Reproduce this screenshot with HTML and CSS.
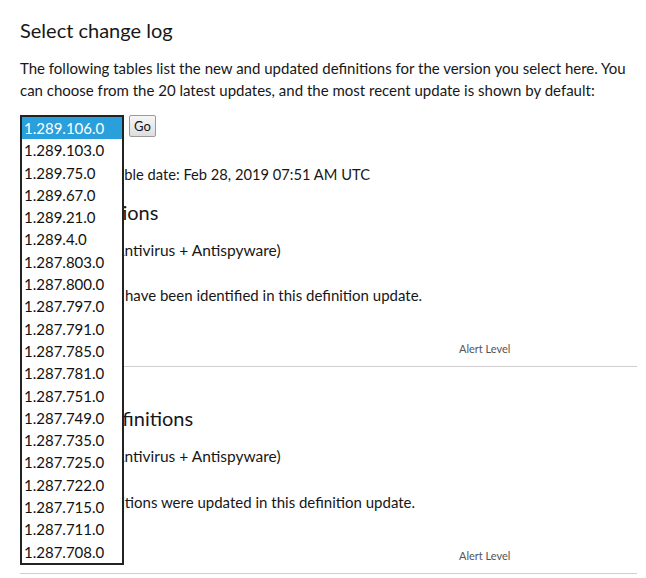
FILE: index.html
```html
<!DOCTYPE html>
<html lang="en">
<head>
<meta charset="utf-8">
<title>Select change log</title>
<link rel="stylesheet" href="styles.css">
</head>
<body>
<main class="page">
  <h2 class="title">Select change log</h2>
  <p class="intro">The following tables list the new and updated definitions for the version you select here. You can choose from the 20 latest updates, and the most recent update is shown by default:</p>

  <div class="picker">
    <div class="select">
      <span class="select-value">1.289.106.0</span>
      <ul class="options">
        <li class="option selected">1.289.106.0</li>
        <li class="option">1.289.103.0</li>
        <li class="option">1.289.75.0</li>
        <li class="option">1.289.67.0</li>
        <li class="option">1.289.21.0</li>
        <li class="option">1.289.4.0</li>
        <li class="option">1.287.803.0</li>
        <li class="option">1.287.800.0</li>
        <li class="option">1.287.797.0</li>
        <li class="option">1.287.791.0</li>
        <li class="option">1.287.785.0</li>
        <li class="option">1.287.781.0</li>
        <li class="option">1.287.751.0</li>
        <li class="option">1.287.749.0</li>
        <li class="option">1.287.735.0</li>
        <li class="option">1.287.725.0</li>
        <li class="option">1.287.722.0</li>
        <li class="option">1.287.715.0</li>
        <li class="option">1.287.711.0</li>
        <li class="option">1.287.708.0</li>
      </ul>
    </div>
    <button class="go" type="button">Go</button>
  </div>

  <p class="date">Definition available date: Feb 28, 2019 07:51 AM UTC</p>

  <section class="section">
    <h3 class="sec-title">New definitions</h3>
    <p class="engine">Antimalware (Antivirus + Antispyware)</p>
    <p class="note">No new threats have been identified in this definition update.</p>
    <div class="thead">
      <span class="th">Threat name</span>
      <span class="th">Alert Level</span>
    </div>
  </section>

  <section class="section">
    <h3 class="sec-title">Updated definitions</h3>
    <p class="engine">Antimalware (Antivirus + Antispyware)</p>
    <p class="note note-updated">The listed definitions were updated in this definition update.</p>
    <div class="thead">
      <span class="th">Threat name</span>
      <span class="th">Alert Level</span>
    </div>
  </section>
</main>
</body>
</html>
```

FILE: styles.css
```css
* { box-sizing: border-box; }
html, body { margin: 0; padding: 0; background: #fff; }
body {
  font-family: Lato, "Open Sans", "Liberation Sans", sans-serif;
  color: #171717;
}
.page {
  width: 617px;
  margin-left: 20px;
  padding-top: 16px;
}
.title {
  margin: 0;
  font-size: 20px;
  line-height: 28px;
  font-weight: 400;
}
.intro {
  margin: 13px 0 0;
  font-size: 15px;
  line-height: 22px;
}
.picker {
  display: flex;
  align-items: flex-start;
  gap: 5px;
  margin-top: 14px;
  height: 22px;
}
.select {
  position: relative;
  width: 104px;
  height: 22px;
}
.select-value { visibility: hidden; font-size: 15px; }
.options {
  position: absolute;
  left: 0;
  top: 0;
  width: 104px;
  margin: 0;
  padding: 0;
  list-style: none;
  background: #fff;
  border: 2px solid #222;
  z-index: 2;
}
.option {
  height: 22.3px;
  line-height: 22px;
  padding-left: 2px;
  font-size: 15px;
  color: #111;
  white-space: nowrap;
}
.option.selected {
  background: #29a0db;
  color: #fff;
}
.go {
  width: 27px;
  height: 22px;
  padding: 0;
  font-family: inherit;
  font-size: 13px;
  color: #111;
  border: 1px solid #9a9a9a;
  border-radius: 2px;
  background: linear-gradient(#f6f6f6, #dedede);
}
.date {
  margin: 26px 0 0;
  font-size: 14.7px;
  line-height: 22px;
}
.section {
  border-bottom: 1px solid #cfcfcf;
}
.sec-title {
  margin: 13px 0 0;
  font-size: 20px;
  line-height: 28px;
  font-weight: 400;
}
.engine {
  margin: 13px 0 0;
  font-size: 15.5px;
  line-height: 22px;
}
.note {
  margin: 23px 0 0;
  font-size: 15px;
  line-height: 22px;
}
.note-updated { margin-top: 24px; }
.thead {
  display: grid;
  grid-template-columns: 439px 1fr;
  margin-top: 36px;
  padding-bottom: 10px;
  font-size: 11px;
  line-height: 14px;
  color: #555;
}
.section + .section .sec-title { margin-top: 37px; }
```
